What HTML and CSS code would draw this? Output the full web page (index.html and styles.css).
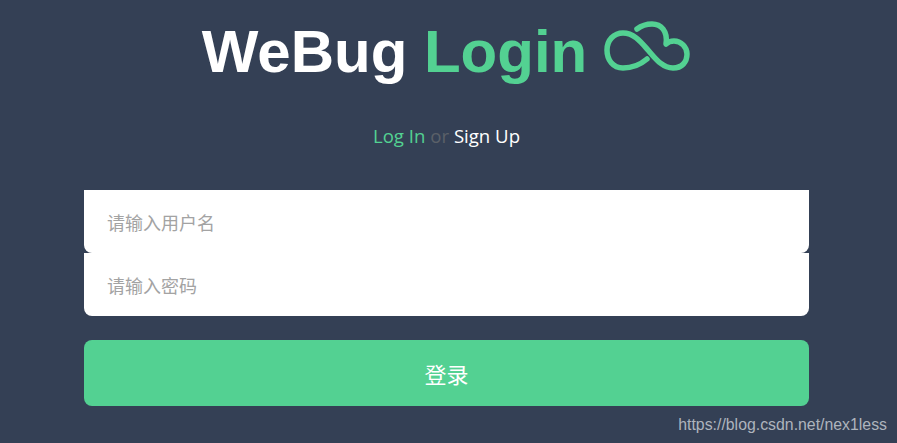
FILE: index.html
```html
<!DOCTYPE html>
<html>
    <head>
        <meta charset="utf-8">
        <link rel="stylesheet" href="styles.css">
        <title>WeBug Login</title>
    </head>
    <body>
        <div class="main">
            <div class="header">
                <h1>WeBug <span class="green">Login</span></h1>
                <svg class="cloud" viewBox="0 0 86 50" width="86" height="50">
                    <path d="M43 38 C36 44 28 47 19 47 C9 47 3 39 3 29 C3 19 10 12 19 12 C30 12 37 21 44 29 C51 37 58 47 69 47 C78 47 83 41 83 33 C83 26 77 20 70 20 C67 20 64 21 62 23 C64 10 57 3 48 3 C42 3 37 5 33 8"/>
                </svg>
            </div>
            <p class="switch"><a class="green">Log In</a> <span class="or">or</span> <a>Sign Up</a></p>
            <form class="form">
                <input type="text" placeholder="请输入用户名"/>
                <input type="password" placeholder="请输入密码"/>
                <button type="button">登录</button>
            </form>
        </div>
        <div class="watermark">https://blog.csdn.net/nex1less</div>
    </body>
</html>
```

FILE: styles.css
```css
html, body {
    height: 100%;
}
body {
    margin: 0;
    overflow: hidden;
    position: relative;
    background-color: #344055;
    color: white;
    font-family: "Liberation Sans", "Noto Sans CJK SC", sans-serif;
}
.main {
    width: 725px;
    margin-left: 84px;
    display: flex;
    flex-direction: column;
}
.header {
    height: 84px;
    padding-right: 1px;
    display: flex;
    justify-content: center;
    align-items: flex-start;
    gap: 17px;
}
.header h1 {
    margin: 19px 0 0;
    font-size: 60px;
    line-height: 66px;
    font-weight: bold;
}
.cloud {
    margin-top: 21px;
}
.cloud path {
    fill: none;
    stroke: #53d192;
    stroke-width: 5.5;
    stroke-linecap: round;
    stroke-linejoin: round;
}
.green {
    color: #53d192;
}
.switch {
    margin: 39px 0 0;
    height: 26px;
    line-height: 26px;
    font-size: 18.6px;
    text-align: center;
    font-family: "Open Sans", sans-serif;
}
.or {
    color: #5b6068;
}
.form {
    display: flex;
    flex-direction: column;
    margin-top: 41px;
}
input {
    height: 63px;
    box-sizing: border-box;
    border: none;
    outline: none;
    padding: 0 23px;
    font-size: 18px;
    font-family: "Noto Sans CJK SC", sans-serif;
    background-color: white;
    border-radius: 0 0 8px 8px;
}
input::placeholder {
    color: #a3a3a3;
}
button {
    height: 66px;
    margin-top: 24px;
    border: none;
    border-radius: 8px;
    color: white;
    font-size: 22px;
    font-family: "Noto Sans CJK SC", sans-serif;
    background-color: #53d192;
}
.watermark {
    position: absolute;
    right: 10px;
    bottom: 9px;
    font-size: 15.85px;
    line-height: 18px;
    color: #aeb4bd;
}
```
